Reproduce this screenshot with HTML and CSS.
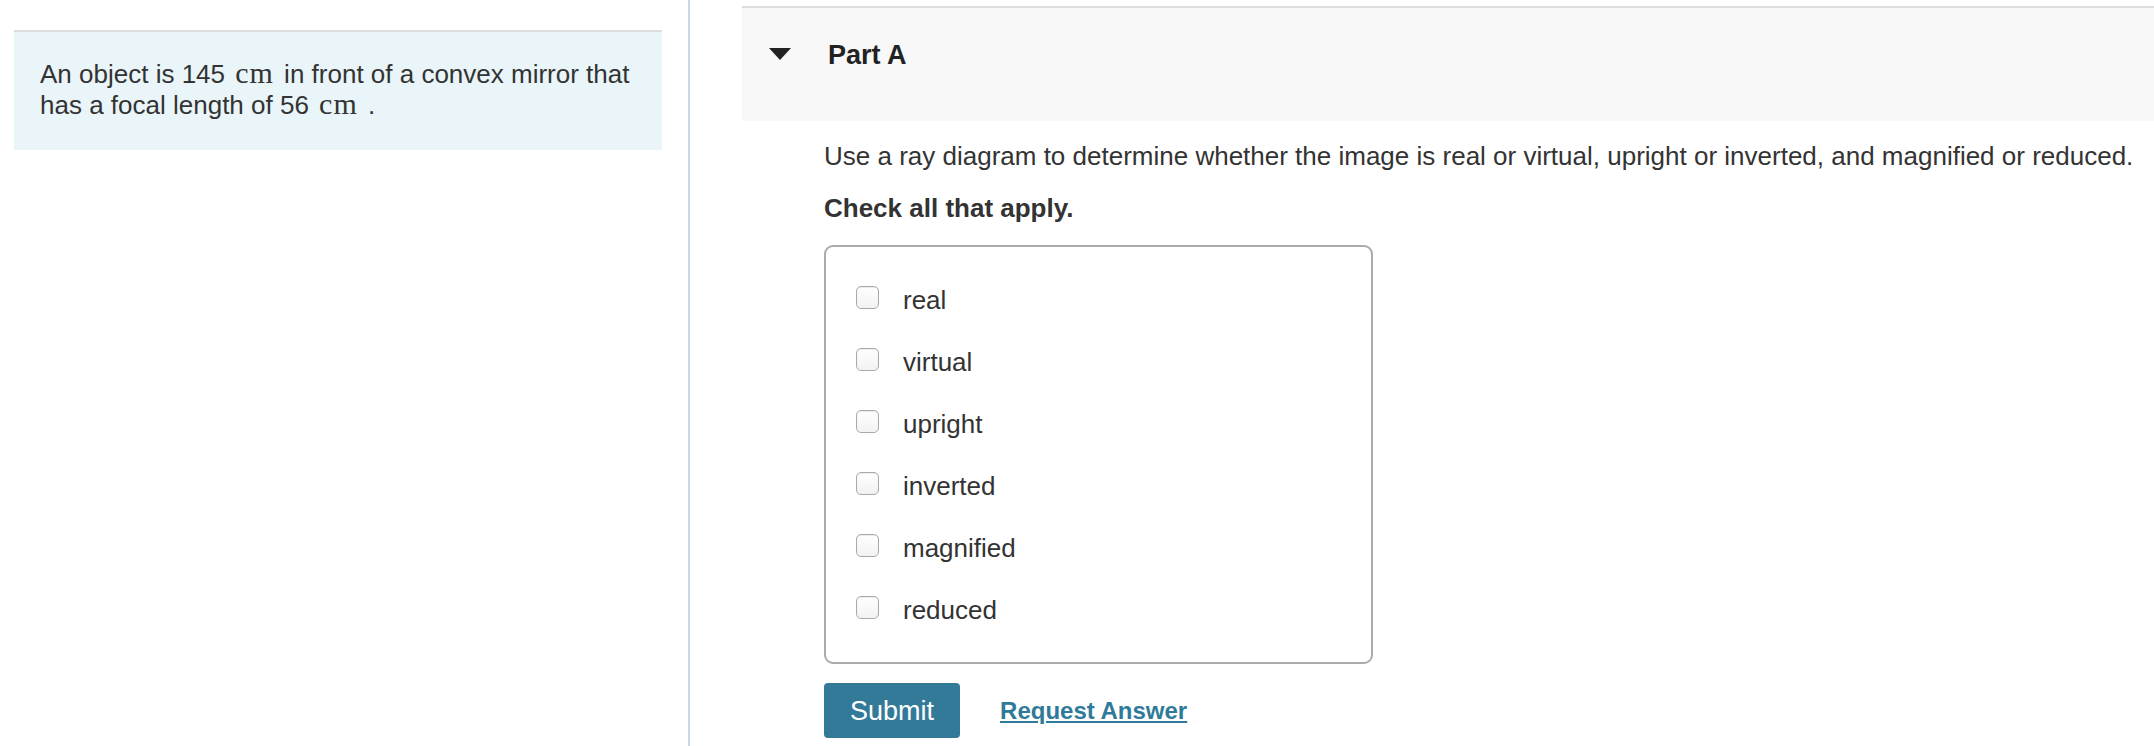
FILE: index.html
```html
<!DOCTYPE html>
<html lang="en">
<head>
    <meta charset="UTF-8">
    <meta name="viewport" content="width=device-width, initial-scale=1.0">
    <title>Convex Mirror - Part A</title>
    <link rel="stylesheet" href="styles.css">
</head>
<body>
    <div class="layout">
        <aside class="intro-column">
            <div class="intro-box">
                <p>An object is 145 <span class="unit">cm</span> in front of a convex mirror that has a focal length of 56 <span class="unit">cm</span> .</p>
            </div>
        </aside>

        <main class="part-column">
            <div class="part-header">
                <span class="caret"></span>
                <h2 class="part-title">Part A</h2>
            </div>

            <div class="part-body">
                <p class="question">Use a ray diagram to determine whether the image is real or virtual, upright or inverted, and magnified or reduced.</p>
                <p class="instruction">Check all that apply.</p>

                <div class="choices">
                    <label class="choice"><input type="checkbox"><span>real</span></label>
                    <label class="choice"><input type="checkbox"><span>virtual</span></label>
                    <label class="choice"><input type="checkbox"><span>upright</span></label>
                    <label class="choice"><input type="checkbox"><span>inverted</span></label>
                    <label class="choice"><input type="checkbox"><span>magnified</span></label>
                    <label class="choice"><input type="checkbox"><span>reduced</span></label>
                </div>

                <div class="actions">
                    <button class="submit-btn">Submit</button>
                    <a href="#" class="request-link">Request Answer</a>
                </div>
            </div>
        </main>
    </div>
</body>
</html>
```

FILE: styles.css
```css
* {
    margin: 0;
    padding: 0;
    box-sizing: border-box;
}

body {
    background: #fff;
    font-family: 'Liberation Sans', Arial, sans-serif;
    color: #333;
    min-height: 100vh;
}

.layout {
    display: flex;
    min-height: 100vh;
}

.intro-column {
    width: 690px;
    flex-shrink: 0;
    border-right: 2px solid #cdd7e1;
    padding: 30px 0 0 14px;
}

.intro-box {
    width: 648px;
    background: #e9f5f8;
    border-top: 2px solid #dddddd;
    padding: 26px 16px 30px 26px;
}

.intro-box p {
    font-size: 26px;
    line-height: 30px;
}

.unit {
    display: inline-block;
    margin: 0 3px;
    font-family: 'Liberation Serif', 'Times New Roman', serif;
    font-size: 30px;
    letter-spacing: 1px;
    line-height: 1;
}

.part-column {
    flex: 1;
    padding: 6px 0 0 52px;
}

.part-header {
    display: flex;
    align-items: flex-start;
    background: #f8f8f8;
    border-top: 2px solid #dddddd;
    height: 115px;
    padding: 31px 0 0 27px;
}

.caret {
    width: 0;
    height: 0;
    margin-top: 9px;
    border-left: 11px solid transparent;
    border-right: 11px solid transparent;
    border-top: 12px solid #222;
}

.part-title {
    margin-left: 37px;
    font-size: 27px;
    line-height: 32px;
    font-weight: bold;
    color: #222;
}

.part-body {
    padding: 20px 0 0 82px;
}

.question,
.instruction {
    font-size: 26px;
    line-height: 30px;
}

.instruction {
    font-weight: bold;
    margin-top: 22px;
}

.choices {
    width: 549px;
    margin-top: 22px;
    border: 2px solid #aaaaaa;
    border-radius: 9px;
    padding: 38px 0 37px 30px;
    display: flex;
    flex-direction: column;
    gap: 32px;
}

.choice {
    display: flex;
    align-items: flex-start;
    font-size: 26px;
    line-height: 30px;
    cursor: pointer;
}

.choice input {
    appearance: none;
    -webkit-appearance: none;
    width: 23px;
    height: 23px;
    margin-top: 1px;
    margin-right: 24px;
    border: 1px solid #a9a9a9;
    border-radius: 5px;
    background: linear-gradient(#ffffff, #f2f2f2);
    box-shadow: inset 0 1px 1px rgba(0, 0, 0, 0.08);
    cursor: pointer;
}

.actions {
    display: flex;
    align-items: center;
    margin-top: 19px;
}

.submit-btn {
    background: #337a99;
    color: #fff;
    border: none;
    border-radius: 4px;
    font-family: 'Liberation Sans', Arial, sans-serif;
    font-size: 27px;
    line-height: 31px;
    height: 55px;
    padding: 13px 26px 11px;
    cursor: pointer;
}

.request-link {
    margin-left: 40px;
    font-size: 24px;
    font-weight: bold;
    color: #2f7a9a;
    text-decoration: underline;
}
```
